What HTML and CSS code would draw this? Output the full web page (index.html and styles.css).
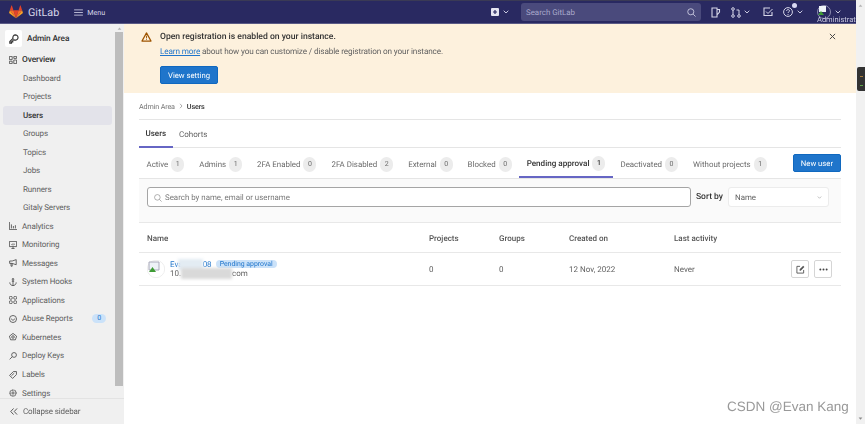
FILE: index.html
```html
<!DOCTYPE html>
<html lang="en">
<head>
    <meta charset="UTF-8">
    <title>Users · Admin Area · GitLab</title>
    <link rel="stylesheet" href="styles.css">
</head>
<body>
    <div class="window">
        <div class="app">
            <header class="topbar">
                <svg class="logo" viewBox="0 0 24 24"><path fill="#e24329" d="M12 22.5 16.4 9H7.6z"/><path fill="#fc6d26" d="M12 22.5 7.6 9H1.500z"/><path fill="#fca326" d="M1.500 9 .2 13.2c-.1.4 0 .8.4 1L12 22.5z"/><path fill="#e24329" d="M1.500 9h6.100L5 1c-.1-.4-.7-.4-.9 0z"/><path fill="#fc6d26" d="M12 22.5 16.4 9h6.100z"/><path fill="#fca326" d="M22.500 9l1.300 4.200c.1.400 0 .8-.4 1L12 22.500z"/><path fill="#e24329" d="M22.500 9h-6.100L19 1c.1-.4.700-.4.900 0z"/></svg>
                <span class="brand">GitLab</span>
                <svg class="menu-icon" viewBox="0 0 10 8"><path d="M0 1h10M0 4h10M0 7h10" stroke="#c9c9e0" stroke-width="1"/></svg>
                <span class="menu-label">Menu</span>
                <div class="top-right">
                    <svg class="top-plus" viewBox="0 0 8 8"><rect width="8" height="8" rx="1" fill="#e4e4f0"/><path d="M4 2v4M2 4h4" stroke="#292961" stroke-width="1.200"/></svg>
                    <svg class="chev" viewBox="0 0 6 4"><path d="M.7.7 3 3l2.300-2.300" fill="none" stroke="#c9c9e0" stroke-width="1"/></svg>
                    <div class="search">
                        <span>Search GitLab</span>
                        <svg class="search-icon" viewBox="0 0 10 10"><circle cx="4.200" cy="4.200" r="3.400" fill="none" stroke="#c9c9e0"/><path d="M6.800 6.800 9.500 9.500" stroke="#c9c9e0"/></svg>
                    </div>
                    <svg class="top-issues" viewBox="0 0 10 11"><path d="M1 1h5v9H1zM6 2.500h2.500v2.500L6 8" fill="none" stroke="#d6d6e8" stroke-width="1.100"/></svg>
                    <svg class="top-mr" viewBox="0 0 10 11"><g fill="none" stroke="#d6d6e8"><circle cx="2" cy="2" r="1.300"/><circle cx="2" cy="9" r="1.300"/><circle cx="8" cy="9" r="1.300"/><path d="M2 3.300v4.400M8 7.700V3H5.500"/></g></svg>
                    <svg class="chev chev-mr" viewBox="0 0 6 4"><path d="M.7.7 3 3l2.300-2.300" fill="none" stroke="#c9c9e0" stroke-width="1"/></svg>
                    <svg class="top-todo" viewBox="0 0 10 10"><path d="M9 5v3.500H1v-7.500h6" fill="none" stroke="#d6d6e8" stroke-width="1.100"/><path d="M3 4.500 5 6.500 9.500 2" fill="none" stroke="#d6d6e8"/></svg>
                    <div class="top-help">
                        <svg viewBox="0 0 10 10"><circle cx="5" cy="5" r="4.400" fill="none" stroke="#d6d6e8"/><path d="M3.600 4c0-2 2.900-1.800 2.900-.2C6.500 5 5 4.800 5 6M5 7v.9" fill="none" stroke="#d6d6e8"/></svg>
                        <i class="help-dot"></i>
                    </div>
                    <svg class="chev chev-help" viewBox="0 0 6 4"><path d="M.7.7 3 3l2.300-2.300" fill="none" stroke="#c9c9e0" stroke-width="1"/></svg>
                    <div class="top-user">
                        <svg class="broken" viewBox="0 0 14 14"><circle cx="7" cy="7" r="6.500" fill="#292961" stroke="#8d8db0"/><path d="M2 1h7v6H2z" fill="#eef3f8"/><path d="M1 10 4 6l3 4z" fill="#3f9c35"/></svg>
                        <svg class="chev" viewBox="0 0 6 4"><path d="M.7.7 3 3l2.300-2.300" fill="none" stroke="#c9c9e0" stroke-width="1"/></svg>
                        <span class="user-alt">Administrator</span>
                    </div>
                </div>
            </header>
            <div class="body">
                <aside class="sidebar">
                    <div class="side-scroll">
                        <div class="side-list">
                            <div class="side-head">
                                <span class="side-badge">
                                    <svg viewBox="0 0 12 12"><path d="M7.800 1a3.200 3.200 0 0 0-3 4.300L1 9.100V11h2V9.500h1.500V8l1.300-1.200A3.200 3.200 0 1 0 7.800 1z" fill="none" stroke="#333" stroke-width="1.400"/></svg>
                                </span>
                                <b>Admin Area</b>
                            </div>
                            <ul class="nav">
                                <li class="nav-top strong"><svg viewBox="0 0 10 10"><path d="M.5.500h3.500v4H.5zM.5 6.500h3.500v3H.5zM6 .5h3.500v2.500H6zM6 5h3.500v4.500H6z" fill="none" stroke="#444"/></svg>Overview</li>
                                <li class="nav-sub">Dashboard</li>
                                <li class="nav-sub">Projects</li>
                                <li class="nav-sub active">Users</li>
                                <li class="nav-sub">Groups</li>
                                <li class="nav-sub">Topics</li>
                                <li class="nav-sub">Jobs</li>
                                <li class="nav-sub">Runners</li>
                                <li class="nav-sub">Gitaly Servers</li>
                                <li class="nav-top"><svg viewBox="0 0 10 10"><path d="M.5 0v9.500H10M3 8V3M5.500 8V5M8 8V4" fill="none" stroke="#444"/></svg>Analytics</li>
                                <li class="nav-top"><svg viewBox="0 0 10 10"><path d="M.5.500h9v6.500h-9zM3 9.500h4M5 7v2.500M3 4.500h1M5 3v2.500M6.500 4h1" fill="none" stroke="#444"/></svg>Monitoring</li>
                                <li class="nav-top"><svg viewBox="0 0 10 10"><path d="M9 .8v6.400L4 5.500H.8v-3H4zM2.500 5.500v3.500h1.500V5.500" fill="none" stroke="#444"/></svg>Messages</li>
                                <li class="nav-top"><svg viewBox="0 0 10 10"><circle cx="5" cy="1.500" r="1" fill="none" stroke="#444"/><path d="M5 2.500v7M1 5.500c0 2.500 2 4 4 4s4-1.500 4-4M3.500 4h3" fill="none" stroke="#444"/></svg>System Hooks</li>
                                <li class="nav-top"><svg viewBox="0 0 10 10"><g fill="none" stroke="#444"><rect x=".5" y=".5" width="3.500" height="3.500" rx="1.200"/><rect x="6" y=".5" width="3.500" height="3.500" rx="1.200"/><rect x=".5" y="6" width="3.500" height="3.500" rx="1.200"/><rect x="6" y="6" width="3.500" height="3.500" rx="1.200"/></g></svg>Applications</li>
                                <li class="nav-top"><svg viewBox="0 0 10 10"><circle cx="5" cy="5" r="4.400" fill="none" stroke="#444"/><path d="M3 4.500C3 7 7 7 7 4.500" fill="none" stroke="#444"/></svg>Abuse Reports<span class="side-count">0</span></li>
                                <li class="nav-top"><svg viewBox="0 0 10 10"><path d="M5 .5 9.500 4 8 8.500H2L.5 4z" fill="none" stroke="#444"/><circle cx="5" cy="5" r="1.600" fill="none" stroke="#444"/></svg>Kubernetes</li>
                                <li class="nav-top"><svg viewBox="0 0 10 10"><circle cx="6.300" cy="3.700" r="3" fill="none" stroke="#444"/><path d="M4 6 .8 9.200" stroke="#444"/></svg>Deploy Keys</li>
                                <li class="nav-top"><svg viewBox="0 0 10 10"><path d="M5.500.7h3.800v3.800L4.500 9.300.7 5.500z" fill="none" stroke="#444"/><path d="M3 6 6.500 2.800" stroke="#444"/></svg>Labels</li>
                                <li class="nav-top"><svg viewBox="0 0 10 10"><circle cx="5" cy="5" r="3.800" fill="none" stroke="#444" stroke-width="1.300" stroke-dasharray="1.500 .5"/><circle cx="5" cy="5" r="1.400" fill="none" stroke="#444"/></svg>Settings</li>
                            </ul>
                        </div>
                        <div class="side-bar">
                            <svg viewBox="0 0 6 4"><path d="M3 .5 5.500 3.500H.5z" fill="#b5b5b5"/></svg>
                            <span class="side-thumb"></span>
                        </div>
                    </div>
                    <div class="collapse"><svg viewBox="0 0 9 8"><path d="M4 .5.800 4 4 7.500M8 .5 4.800 4 8 7.500" fill="none" stroke="#444"/></svg>Collapse sidebar</div>
                </aside>
                <main class="main">
                    <div class="alert">
                        <svg class="alert-icon" viewBox="0 0 12 11"><path d="M6 1 11 10H1z" fill="none" stroke="#9e5400" stroke-width="1.300" stroke-linejoin="round"/><path d="M6 4v3M6 8v.8" stroke="#9e5400"/></svg>
                        <div class="alert-body">
                            <h4>Open registration is enabled on your instance.</h4>
                            <p><a href="#">Learn more</a> about how you can customize / disable registration on your instance.</p>
                            <button class="btn-blue">View setting</button>
                        </div>
                        <svg class="alert-close" viewBox="0 0 8 8"><path d="M1 1l6 6M7 1 1 7" stroke="#444" stroke-width="1.100"/></svg>
                    </div>
                    <div class="content">
                        <div class="crumbs">Admin Area<svg viewBox="0 0 4 6"><path d="M1 .8 3 3 1 5.200" fill="none" stroke="#888" stroke-width=".7"/></svg><b>Users</b></div>
                        <div class="page-tabs">
                            <span class="page-tab on">Users</span>
                            <span class="page-tab">Cohorts</span>
                        </div>
                        <div class="filters">
                            <span class="ftab">Active<em>1</em></span>
                            <span class="ftab">Admins<em>1</em></span>
                            <span class="ftab">2FA Enabled<em>0</em></span>
                            <span class="ftab">2FA Disabled<em>2</em></span>
                            <span class="ftab">External<em>0</em></span>
                            <span class="ftab">Blocked<em>0</em></span>
                            <span class="ftab on">Pending approval<em>1</em></span>
                            <span class="ftab">Deactivated<em>0</em></span>
                            <span class="ftab">Without projects<em>1</em></span>
                            <button class="btn-blue new-user">New user</button>
                        </div>
                        <div class="search-row">
                            <div class="user-search">
                                <svg viewBox="0 0 10 10"><circle cx="4.200" cy="4.200" r="3.500" fill="none" stroke="#888" stroke-width=".8"/><path d="M6.800 6.800 9.500 9.500" stroke="#888" stroke-width=".8"/></svg>
                                Search by name, email or username
                            </div>
                            <span class="sort-label">Sort by</span>
                            <div class="sort-select">Name<svg viewBox="0 0 6 4"><path d="M.7.7 3 3l2.300-2.300" fill="none" stroke="#999" stroke-width=".8"/></svg></div>
                        </div>
                        <div class="users-table">
                            <div class="t-row t-head">
                                <span class="c-name">Name</span>
                                <span class="c-projects">Projects</span>
                                <span class="c-groups">Groups</span>
                                <span class="c-created">Created on</span>
                                <span class="c-last">Last activity</span>
                            </div>
                            <div class="t-row t-user">
                                <div class="c-name user-cell">
                                    <svg class="avatar" viewBox="0 0 18 18"><circle cx="9" cy="9" r="8.700" fill="#fff" stroke="#eee"/><path d="M2 2h10v8H2z" fill="#eef2f7" stroke="#aab"/><path d="M2 12l3.500-5 3.500 5z" fill="#3f9c35"/></svg>
                                    <div class="user-lines">
                                        <div class="user-name"><a href="#">Eva</a><i class="redact r-name"></i><a href="#">08</a><span class="pending">Pending approval</span></div>
                                        <div class="user-mail">10.<i class="redact r-mail"></i>com</div>
                                    </div>
                                </div>
                                <span class="c-projects">0</span>
                                <span class="c-groups">0</span>
                                <span class="c-created">12 Nov, 2022</span>
                                <span class="c-last">Never</span>
                                <div class="c-actions">
                                    <span class="act"><svg viewBox="0 0 10 10"><path d="M8.500 5.500v3.500h-7.500v-7.500h3.500" fill="none" stroke="#555"/><path d="M4 6.300V4.800L8 .8l1.300 1.300-4 4.200z" fill="#555"/></svg></span>
                                    <span class="act"><svg viewBox="0 0 10 4"><circle cx="1.500" cy="2" r="1.100" fill="#444"/><circle cx="5" cy="2" r="1.100" fill="#444"/><circle cx="8.500" cy="2" r="1.100" fill="#444"/></svg></span>
                                </div>
                            </div>
                        </div>
                    </div>
                </main>
            </div>
        </div>
        <div class="page-bar">
            <svg viewBox="0 0 6 4"><path d="M3 .5 5.500 3.500H.5z" fill="#b5b5b5"/></svg>
            <svg class="page-bar-down" viewBox="0 0 6 4"><path d="M3 3.500.5.500h5z" fill="#8a8a8a"/></svg>
        </div>
    </div>
    <div class="meter"><i></i><i></i></div>
    <div class="watermark">CSDN @Evan Kang</div>
</body>
</html>
```
FILE: styles.css
```css
* {
    box-sizing: border-box;
}
html, body {
    height: 100%;
    margin: 0;
    overflow: hidden;
}
body {
    position: relative;
    background: #fff;
    color: #5f5f5f;
    font-family: Roboto, "Noto Sans", sans-serif;
    font-size: 7.9px;
    text-rendering: geometricPrecision;
}
a {
    color: #1f75cb;
}
button {
    font-family: inherit;
    text-rendering: geometricPrecision;
}
.window {
    display: flex;
    height: 424px;
    filter: blur(.4px);
}
.app {
    display: flex;
    flex: 1;
    flex-direction: column;
    min-width: 0;
}
.page-bar {
    display: flex;
    flex-direction: column;
    align-items: center;
    justify-content: space-between;
    width: 9px;
    padding: 4px 0;
    background: #f1f1f1;
}
.page-bar svg {
    width: 5px;
    height: 3px;
}

/* top bar */
.topbar {
    display: flex;
    align-items: center;
    height: 24px;
    padding-left: 9px;
    background: #292961;
    border-top: 1px solid #3a3a55;
    border-bottom: 1px solid #5a5a86;
    color: #d6d6e8;
}
.logo {
    width: 14px;
    height: 14px;
}
.brand {
    margin-left: 5px;
    font-size: 10.8px;
}
.menu-icon {
    width: 9px;
    height: 7px;
    margin-left: 15px;
}
.menu-label {
    margin-left: 4px;
    font-size: 7.200px;
}
.top-right {
    display: flex;
    align-items: center;
    height: 100%;
    margin-left: auto;
}
.top-plus {
    width: 8px;
    height: 8px;
}
.chev {
    width: 6px;
    height: 4px;
    margin-left: 4px;
}
.search {
    display: flex;
    align-items: center;
    justify-content: space-between;
    width: 180px;
    height: 18px;
    margin-left: 12px;
    padding: 1px 5px 0;
    border-radius: 3px;
    background: #4a4a7c;
    color: #a9a9cb;
}
.search-icon {
    width: 9px;
    height: 9px;
}
.top-issues {
    width: 10px;
    height: 11px;
    margin-left: 10px;
}
.top-mr {
    width: 10px;
    height: 11px;
    margin-left: 10px;
}
.chev-mr {
    margin-left: 3px;
}
.top-todo {
    width: 10px;
    height: 10px;
    margin-left: 13px;
}
.top-help {
    position: relative;
    width: 10px;
    height: 10px;
    margin-left: 10px;
}
.top-help svg {
    display: block;
}
.help-dot {
    position: absolute;
    top: -4px;
    right: -4px;
    width: 5px;
    height: 5px;
    border-radius: 50%;
    background: #d9d9f2;
}
.chev-help {
    margin-left: 4px;
}
.top-user {
    position: relative;
    display: flex;
    align-items: center;
    width: 39px;
    height: 100%;
    margin-left: 14px;
    overflow: hidden;
}
.broken {
    width: 14px;
    height: 14px;
}
.user-alt {
    position: absolute;
    top: 14px;
    left: 0;
    color: #c9c9e0;
    font-size: 7.500px;
    white-space: nowrap;
}

/* sidebar */
.body {
    display: flex;
    flex: 1;
    min-height: 0;
}
.sidebar {
    display: flex;
    flex-direction: column;
    width: 124px;
    background: #f0f0f0;
    font-size: 8px;
    letter-spacing: -.12px;
}
.side-scroll {
    display: flex;
    flex: 1;
    min-height: 0;
}
.side-list {
    flex: 1;
    min-width: 0;
    padding: 6.200px 3px 0;
    overflow: hidden;
}
.side-bar {
    width: 8px;
    margin-right: 1px;
    padding-top: 3px;
}
.side-bar svg {
    display: block;
    width: 5px;
    height: 3px;
    margin: 0 auto 2px;
}
.side-thumb {
    display: block;
    height: 354px;
    background: #bdbdbd;
}
.side-head {
    display: flex;
    align-items: center;
    height: 17px;
    margin-bottom: 3.300px;
    padding-left: 2px;
    color: #333;
}
.side-head b {
    font-size: 8.300px;
    font-weight: 500;
}
.side-badge {
    display: flex;
    align-items: center;
    justify-content: center;
    width: 17px;
    height: 17px;
    margin-right: 5px;
    border-radius: 2px;
    background: #fff;
}
.side-badge svg {
    width: 10px;
    height: 10px;
}
.nav {
    margin: 0;
    padding: 0;
    list-style: none;
}
.nav li {
    display: flex;
    align-items: center;
    height: 18.530px;
    border-radius: 3px;
}
.nav svg {
    width: 8px;
    height: 8px;
    margin-right: 5px;
    flex: none;
}
.nav-top {
    padding-left: 6px;
}
.nav-sub {
    padding-left: 20px;
}
.strong {
    color: #333;
    font-size: 8.400px;
    font-weight: 500;
}
.nav .active {
    background: #e3e3ea;
    color: #333;
    font-weight: 500;
}
.side-count {
    margin-left: auto;
    margin-right: 6px;
    padding: 0 5px;
    border-radius: 6px;
    background: #cbe2f9;
    color: #1f75cb;
    font-size: 7px;
    line-height: 9px;
}
.collapse {
    display: flex;
    align-items: center;
    height: 26px;
    padding-left: 10px;
    border-top: 1px solid #e3e3e3;
}
.collapse svg {
    width: 8px;
    height: 7px;
    margin-right: 5px;
}

/* banner */
.main {
    flex: 1;
    min-width: 0;
}
.alert {
    display: flex;
    height: 69px;
    padding: 8px 20px 0 17px;
    background: #fdf1dd;
}
.alert-icon {
    width: 11px;
    height: 10px;
    flex: none;
}
.alert-body {
    flex: 1;
    margin-left: 8px;
}
.alert h4 {
    margin: 0;
    color: #333;
    font-size: 8.600px;
    font-weight: 500;
    line-height: 11px;
}
.alert p {
    margin: 4px 0 0;
    font-size: 8.200px;
    letter-spacing: -.13px;
    line-height: 11px;
}
.btn-blue {
    display: block;
    height: 18px;
    padding: 0 7px;
    border: 1px solid #1068bf;
    border-radius: 2px;
    background: #1f75cb;
    color: #fff;
    font-size: 7.700px;
}
.alert .btn-blue {
    margin-top: 8px;
}
.alert-close {
    width: 7px;
    height: 7px;
    margin-top: 1px;
}

/* users page */
.content {
    padding: 0 15px;
}
.crumbs {
    display: flex;
    align-items: center;
    height: 27px;
    border-bottom: 1px solid #e5e5e5;
    color: #737373;
    font-size: 7.200px;
    letter-spacing: -.15px;
}
.crumbs svg {
    width: 4px;
    height: 6px;
    margin: 0 4px;
}
.crumbs b {
    color: #333;
    font-weight: 500;
}
.page-tabs {
    display: flex;
    height: 28px;
    border-bottom: 1px solid #e5e5e5;
    font-size: 8px;
}
.page-tab {
    display: flex;
    align-items: center;
    padding: 0 6.500px;
    height: 28px;
}
.page-tab.on {
    border-bottom: 2px solid #6666c4;
    color: #333;
    font-weight: 500;
}
.filters {
    display: flex;
    align-items: center;
    height: 31px;
    border-bottom: 1px solid #e5e5e5;
}
.ftab {
    display: flex;
    align-items: center;
    height: 30px;
    padding: 2px 7.500px 0;
    color: #6a6a6a;
    white-space: nowrap;
}
.ftab em {
    width: 13px;
    height: 15px;
    margin-left: 3px;
    border-radius: 7px;
    background: #ececec;
    font-size: 7px;
    font-style: normal;
    line-height: 15px;
    text-align: center;
}
.ftab.on {
    border-bottom: 2px solid #6666c4;
    color: #333;
    font-size: 8.100px;
    font-weight: 500;
}
.new-user {
    flex: none;
    margin-left: auto;
    white-space: nowrap;
}
.search-row {
    display: flex;
    align-items: flex-start;
    height: 44px;
    padding: 8px 12px 0 8px;
    background: #fafafa;
    border-bottom: 1px solid #e8e8e8;
}
.user-search {
    display: flex;
    align-items: center;
    width: 545px;
    height: 20px;
    padding: 1px 0 0 6px;
    border: 1px solid #a5a5a5;
    border-radius: 3px;
    background: #fff;
    color: #777;
}
.user-search svg {
    width: 8px;
    height: 8px;
    margin-right: 3px;
}
.sort-label {
    margin-left: 5px;
    color: #333;
    font-size: 8.500px;
    font-weight: 500;
    line-height: 21px;
    white-space: nowrap;
}
.sort-select {
    display: flex;
    align-items: center;
    justify-content: space-between;
    flex: none;
    width: 101px;
    height: 20px;
    margin-left: 5px;
    padding: 1px 6px 0;
    border: 1px solid #ececec;
    border-radius: 3px;
    background: #fff;
}
.sort-select svg {
    width: 5px;
    height: 3px;
}
.t-row {
    display: grid;
    grid-template-columns: 282px 70px 70px 105px 1fr auto;
    align-items: center;
    padding: 0 9px 0 8px;
    border-bottom: 1px solid #e8e8e8;
}
.t-row > span {
    padding-top: 1px;
}
.t-head {
    height: 30px;
    font-size: 8px;
    font-weight: 500;
    color: #555;
}
.t-user {
    height: 33px;
    font-size: 8px;
}
.user-cell {
    display: flex;
    align-items: center;
}
.avatar {
    width: 18px;
    height: 18px;
    margin-right: 5px;
}
.user-name {
    display: flex;
    align-items: center;
    height: 9px;
    line-height: 9px;
}
.user-name a {
    text-decoration: none;
}
.user-mail {
    display: flex;
    align-items: center;
    height: 10px;
}
.redact {
    display: block;
    height: 11px;
    background: #e3ecf3;
    filter: blur(1.500px);
}
.r-name {
    width: 25px;
    margin-left: -5px;
}
.r-mail {
    width: 51px;
    background: #d9d9d9;
}
.pending {
    margin-left: 4px;
    padding: 0 4px;
    border-radius: 5px;
    background: #cbe2f9;
    color: #1f75cb;
    font-size: 6.900px;
    line-height: 8px;
    white-space: nowrap;
}
.c-actions {
    display: flex;
    gap: 5px;
}
.act {
    display: flex;
    align-items: center;
    justify-content: center;
    width: 18px;
    height: 18px;
    border: 1px solid #d5d5d5;
    border-radius: 2px;
    background: #fff;
}
.act svg {
    width: 9px;
    height: 9px;
}

/* overlays from the screenshot */
.meter {
    position: absolute;
    top: 67px;
    right: 0;
    display: flex;
    flex-direction: column;
    gap: 8px;
    align-items: center;
    width: 8px;
    height: 24px;
    padding-top: 9px;
    border-radius: 2px 0 0 2px;
    background: #333;
}
.meter i {
    width: 3px;
    height: 1px;
    background: #a87b3a;
}
.meter i + i {
    background: #5ea548;
}
.watermark {
    position: absolute;
    top: 399px;
    left: 727px;
    color: #999;
    font-family: "Liberation Sans", sans-serif;
    font-size: 13.500px;
    line-height: 16px;
    white-space: nowrap;
}
```
